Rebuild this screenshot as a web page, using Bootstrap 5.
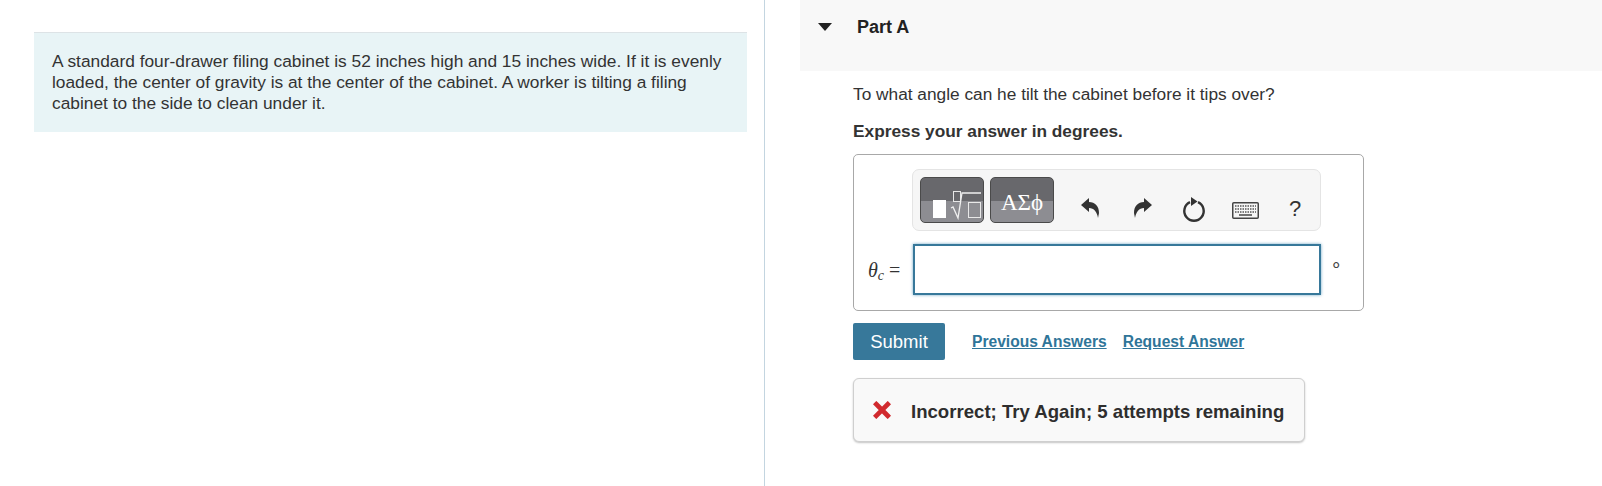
<!DOCTYPE html>
<html lang="en">
<head>
    <meta charset="UTF-8">
    <meta name="viewport" content="width=device-width, initial-scale=1.0">
    <title>Part A</title>
    <link rel="stylesheet" href="https://cdn.jsdelivr.net/npm/bootstrap@5.3.0/dist/css/bootstrap.min.css">
    <style>
        html, body { height: 486px; overflow: hidden; }
        body { font-family: "Liberation Sans", Arial, sans-serif; font-size: 17.330px; color: #333; background: #fff; }
        .left-pane { width: 765px; height: 486px; border-right: 1px solid #c3d5e0; padding: 32px 17px 0 34px; flex: none; }
        .intro-box { background: #e8f4f6; border-top: 1px solid #dde3e6; height: 100px; padding: 18px 18px 0; line-height: 21px; }
        .right-pane { flex: 1 1 auto; padding-left: 35px; }
        .part-head { height: 71px; background: #f8f8f8; padding: 17px 0 0 18px; color: #222; }
        .part-head svg { margin-top: 6px; }
        .part-head .part-title { margin-left: 25px; line-height: 20px; font-size: 18px; }
        .part-body { padding-left: 53px; }
        .q-text { margin: 13px 0 0; line-height: 21px; font-size: 17.300px; }
        .q-note { margin: 16px 0 0; line-height: 21px; font-weight: 700; font-size: 17.300px; }
        .answer-box { width: 511px; height: 157px; margin-top: 12px; border: 1px solid #a8a8a8; border-radius: 5px; padding: 14px 0 0 58px; }
        .math-toolbar { width: 409px; height: 62px; background: #f6f6f6; border: 1px solid #e4e4e4; border-radius: 7px; padding: 7px 0 0 7px; }
        .tool-btn { flex: none; width: 64px; height: 46px; border-radius: 5px; border: 1px solid #4a4a4a; background: linear-gradient(#68686c 0, #68686c 53%, #8d8d92 53%, #8d8d92 100%); color: #fff; margin-right: 6px; font-family: "Liberation Serif", serif; font-size: 23px; }
        .greek-btn { padding-top: 7px; }
        .tool-set { flex: none; height: 46px; margin-top: 8px; }
        .tool-ico { flex: none; text-align: center; color: #333; }
        .ico-undo { width: 59px; }
        .ico-redo { width: 47px; }
        .ico-reset { width: 55px; padding-top: 2px; }
        .ico-keys { width: 49px; padding-top: 4px; }
        .ico-help { width: 50px; font-size: 22px; }
        .answer-row { margin-top: 13px; margin-left: -58px; }
        .var-label { width: 59px; padding-left: 14px; font-family: "Liberation Serif", serif; font-size: 20px; color: #333; white-space: nowrap; }
        .var-label sub { font-size: 14px; }
        .answer-input { width: 408px; height: 51px; border: 2px solid #37789a; box-shadow: 0 0 3px #6fa6c4; background: #fff; }
        .deg-mark { margin-left: 11px; font-size: 21px; color: #444; }
        .action-row { margin-top: 12px; }
        .submit-btn { width: 92px; height: 37px; background: #37789a; color: #fff; border: 0; border-radius: 2px; padding: 0; font-size: 18.500px; }
        .submit-btn:hover { background: #37789a; color: #fff; }
        .act-link { color: #2f7599; font-size: 15.600px; font-weight: 700; margin-left: 16px; }
        .act-link.first-link { margin-left: 27px; }
        .feedback { width: 452px; height: 64px; margin-top: 18px; background: #f9f9f9; border: 1px solid #cfcfcf; border-radius: 6px; box-shadow: 0 1px 2px #c4c4c4; padding-left: 19px; font-weight: 700; font-size: 18.600px; color: #2e2e2e; white-space: nowrap; }
        .feedback svg { flex: none; }
        .feedback span { padding-top: 3px; }
    </style>
</head>
<body>
    <div class="d-flex">
        <div class="left-pane">
            <div class="intro-box">A standard four-drawer filing cabinet is 52 inches high and 15 inches wide. If it is evenly loaded, the center of gravity is at the center of the cabinet. A worker is tilting a filing cabinet to the side to clean under it.</div>
        </div>
        <div class="right-pane">
            <div class="part-head d-flex align-items-start">
                <svg width="14" height="8" viewBox="0 0 14 8"><path d="M0 0H14L7 8Z" fill="#222"/></svg>
                <strong class="part-title">Part A</strong>
            </div>
            <div class="part-body">
                <p class="q-text">To what angle can he tilt the cabinet before it tips over?</p>
                <p class="q-note">Express your answer in degrees.</p>
                <div class="answer-box">
                    <div class="math-toolbar d-flex align-items-start">
                        <div class="tool-btn d-flex align-items-center justify-content-center">
                            <svg width="62" height="44" viewBox="0 0 62 44">
                                <rect x="12" y="22" width="13" height="18" fill="#fff"/>
                                <rect x="32.500" y="13.500" width="7" height="10" fill="none" stroke="#e8e8e8"/>
                                <path d="M30 30l2-1 5 11 4-25h19" fill="none" stroke="#f0f0f0" stroke-width="1.300"/>
                                <rect x="47.500" y="24.500" width="12" height="15" fill="none" stroke="#e8e8e8"/>
                            </svg>
                        </div>
                        <div class="tool-btn greek-btn d-flex align-items-center justify-content-center">ΑΣϕ</div>
                        <div class="tool-set d-flex align-items-center">
                            <div class="tool-ico ico-undo">
                                <svg width="18" height="20" viewBox="0 0 18 20"><path d="M0 7L8 0V4C14 4 18 8 18 15L17 20C16 14 13 10 8 10V14Z" fill="#333"/></svg>
                            </div>
                            <div class="tool-ico ico-redo">
                                <svg width="18" height="20" viewBox="0 0 18 20"><path d="M18 7L10 0V4C4 4 0 8 0 15L1 20C2 14 5 10 10 10V14Z" fill="#333"/></svg>
                            </div>
                            <div class="tool-ico ico-reset">
                                <svg width="24" height="26" viewBox="0 0 24 26"><path d="M8 6.200A9.700 9.700 0 1 0 16 6.200" fill="none" stroke="#333" stroke-width="2.400"/><path d="M9 1L15.500 5.500L9 10Z" fill="#333"/></svg>
                            </div>
                            <div class="tool-ico ico-keys">
                                <svg width="27" height="17" viewBox="0 0 27 17"><rect x=".75" y=".75" width="25.500" height="15.500" rx="1" fill="#f6f6f6" stroke="#444" stroke-width="1.500"/><path d="M3 4h21M3 7h21M3 10h21" stroke="#555" stroke-width="1.500" stroke-dasharray="1.500 1"/><path d="M7 13h13" stroke="#444" stroke-width="1.500"/></svg>
                            </div>
                            <div class="tool-ico ico-help">?</div>
                        </div>
                    </div>
                    <div class="answer-row d-flex align-items-center">
                        <div class="var-label"><i>θ<sub>c</sub></i> =</div>
                        <div class="answer-input"></div>
                        <span class="deg-mark">°</span>
                    </div>
                </div>
                <div class="action-row d-flex align-items-center">
                    <button type="button" class="btn submit-btn">Submit</button>
                    <a href="#" class="act-link first-link">Previous Answers</a>
                    <a href="#" class="act-link">Request Answer</a>
                </div>
                <div class="feedback d-flex align-items-center">
                    <svg width="18" height="18" viewBox="0 0 18 18" class="me-3"><path d="M3 3L15 15M15 3L3 15" stroke="#d12a2e" stroke-width="5" stroke-linecap="square" transform="translate(9 9) scale(.95) translate(-9 -9)"/></svg>
                    <span class="ms-1">Incorrect; Try Again; 5 attempts remaining</span>
                </div>
            </div>
        </div>
    </div>
    <script src="https://cdn.jsdelivr.net/npm/bootstrap@5.3.0/dist/js/bootstrap.bundle.min.js"></script>
</body>
</html>
